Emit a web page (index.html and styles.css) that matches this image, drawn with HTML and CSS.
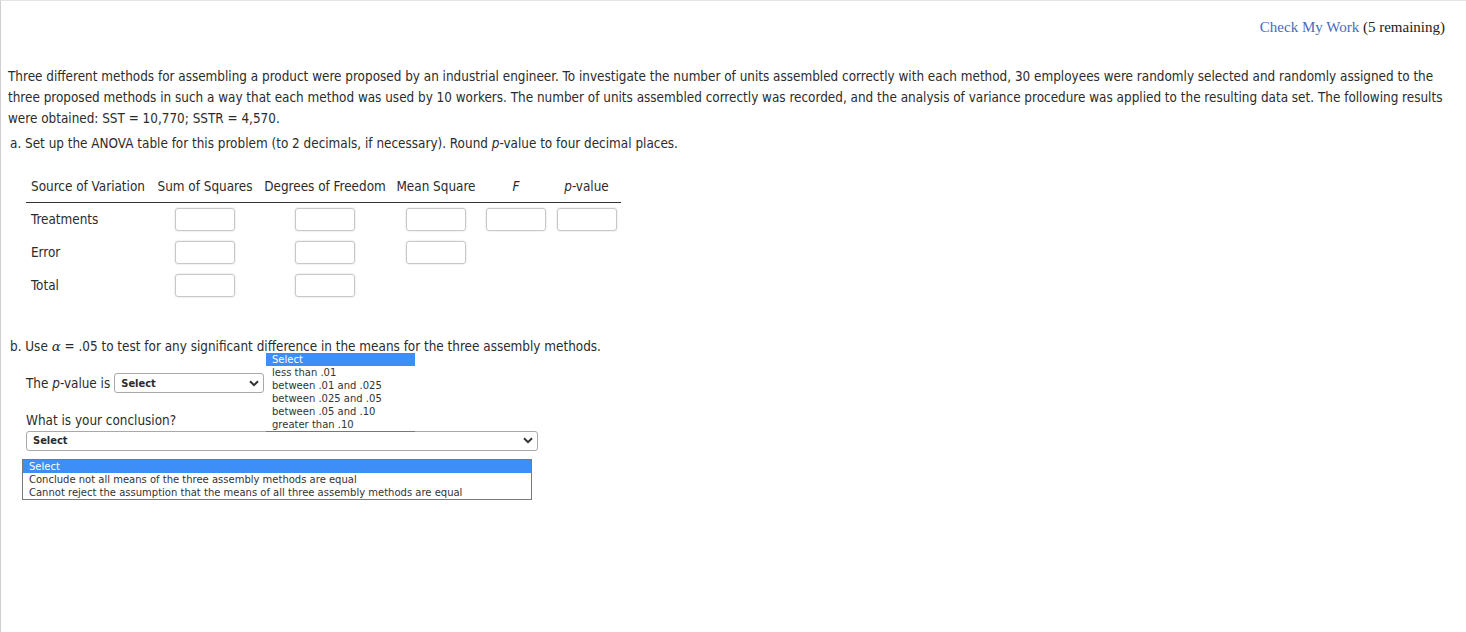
FILE: index.html
```html
<!DOCTYPE html>
<html>
<head>
<meta charset="utf-8">
<link rel="stylesheet" href="styles.css">
</head>
<body>
<div class="frame">
  <div class="topbar"><span class="cmw">Check My Work</span> (5 remaining)</div>
  <p class="intro">Three different methods for assembling a product were proposed by an industrial engineer. To investigate the number of units assembled correctly with each method, 30 employees were randomly selected and randomly assigned to the three proposed methods in such a way that each method was used by 10 workers. The number of units assembled correctly was recorded, and the analysis of variance procedure was applied to the resulting data set. The following results were obtained: SST = 10,770; SSTR = 4,570.</p>
  <p class="qa">a. Set up the ANOVA table for this problem (to 2 decimals, if necessary). Round <i>p</i>-value to four decimal places.</p>
  <div class="anova">
    <div class="th first">Source of Variation</div>
    <div class="th">Sum of Squares</div>
    <div class="th">Degrees of Freedom</div>
    <div class="th">Mean Square</div>
    <div class="th"><i>F</i></div>
    <div class="th"><i>p</i>-value</div>

    <div class="td first">Treatments</div>
    <div class="td"><span class="inp"></span></div>
    <div class="td"><span class="inp"></span></div>
    <div class="td"><span class="inp"></span></div>
    <div class="td"><span class="inp"></span></div>
    <div class="td"><span class="inp"></span></div>

    <div class="td first">Error</div>
    <div class="td"><span class="inp"></span></div>
    <div class="td"><span class="inp"></span></div>
    <div class="td"><span class="inp"></span></div>
    <div class="td"></div>
    <div class="td"></div>

    <div class="td first">Total</div>
    <div class="td"><span class="inp"></span></div>
    <div class="td"><span class="inp"></span></div>
    <div class="td"></div>
    <div class="td"></div>
    <div class="td"></div>
  </div>
  <p class="qb">b. Use <span class="alpha">α</span> = .05 to test for any significant difference in the means for the three assembly methods.</p>
  <div class="pline">
    <span class="lbl">The <i>p</i>-value is</span>
    <span class="sel sel-p">Select<svg class="chev" viewBox="0 0 10 7" width="10" height="7"><path d="M1 1.2 L5 5.2 L9 1.2" fill="none" stroke="#333" stroke-width="2"/></svg></span>
    <div class="popup pop-p">
      <div class="opt on">Select</div>
      <div class="opt">less than .01</div>
      <div class="opt">between .01 and .025</div>
      <div class="opt">between .025 and .05</div>
      <div class="opt">between .05 and .10</div>
      <div class="opt">greater than .10</div>
    </div>
  </div>
  <div class="concl">What is your conclusion?</div>
  <div class="sel sel-c">Select<svg class="chev" viewBox="0 0 10 7" width="10" height="7"><path d="M1 1.2 L5 5.2 L9 1.2" fill="none" stroke="#333" stroke-width="2"/></svg></div>
  <div class="listbox">
    <div class="opt on">Select</div>
    <div class="opt">Conclude not all means of the three assembly methods are equal</div>
    <div class="opt">Cannot reject the assumption that the means of all three assembly methods are equal</div>
  </div>
</div>
</body>
</html>
```
FILE: styles.css
```css
html, body { margin: 0; padding: 0; background: #fff; }
body { width: 1466px; height: 632px; overflow: hidden; font-family: "DejaVu Sans Condensed", "DejaVu Sans", sans-serif; color: #2b2b2b; }
.frame { box-sizing: border-box; height: 632px; border-left: 1px solid #cfcfcf; border-top: 1px solid #e4e4e4; padding: 0 0 0 7px; position: relative; }
.topbar { font-family: "Liberation Serif", serif; font-size: 15px; text-align: right; padding: 18px 21px 0 0; height: 21px; color: #222; }
.cmw { color: #4a69bd; }
.intro { margin: 26px 8px 0 0; font-size: 13.4px; line-height: 21px; }
.qa { margin: 4px 0 0 2px; font-size: 13.4px; line-height: 21px; }
.anova { display: grid; grid-template-columns: 126px 106px 134px 88px 72px 69px; width: 595px; margin: 24px 0 0 18px; font-size: 13.4px; }
.th { height: 24px; line-height: 18px; text-align: center; white-space: nowrap; border-bottom: 1px solid #333; }
.th.first, .td.first { text-align: left; padding-left: 5px; }
.td { height: 33px; display: flex; align-items: center; justify-content: center; }
.td.first { justify-content: flex-start; }
.inp { box-sizing: border-box; display: block; width: 60px; height: 23px; border: 1px solid #c8c8c8; border-radius: 3px; box-shadow: 0 0 2px rgba(0,0,0,0.18); }
.qb { margin: 34px 0 0 2px; font-size: 13.4px; line-height: 21px; }
.alpha { font-family: "DejaVu Serif", serif; font-style: italic; }
.pline { position: relative; margin: 16px 0 0 18px; height: 20px; display: flex; align-items: center; font-size: 13.4px; }
.lbl { margin-right: 4px; }
.sel { box-sizing: border-box; display: inline-flex; align-items: center; justify-content: space-between; height: 20px; border: 1px solid #a9a9a9; border-radius: 3px; padding: 0 4px 0 6px; font-size: 11px; font-weight: bold; font-family: "DejaVu Sans Condensed", "DejaVu Sans", sans-serif; background: #fff; }
.sel-p { width: 150px; }
.sel-c { width: 512px; margin: 0 0 0 18px; }
.popup { position: absolute; left: 240px; top: -20px; width: 149px; background: #fff; border-bottom: 1px solid #777; }
.opt { font-size: 10px; line-height: 13px; height: 13px; padding-left: 6px; font-family: "DejaVu Sans", sans-serif; color: #333; white-space: nowrap; }
.opt.on { background: #3d8ef7; color: #fff; }
.concl { margin: 20px 0 0 18px; font-size: 13.4px; line-height: 16px; }
.listbox { box-sizing: border-box; width: 510px; margin: 8px 0 0 14px; border: 1px solid #7a7a7a; }
```
